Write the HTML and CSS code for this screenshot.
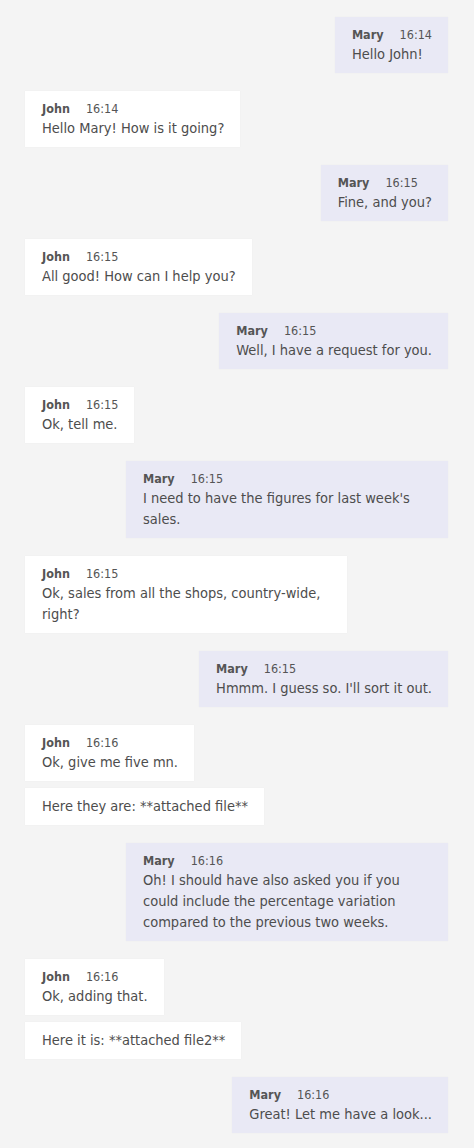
FILE: index.html
```html
<!DOCTYPE html>
<html lang="en">
<head>
<meta charset="utf-8">
<title>Chat</title>
<link rel="stylesheet" href="styles.css">
</head>
<body>
<div class="chat">
  <div class="msg mine"><div class="meta"><span class="name">Mary</span><span class="time">16:14</span></div><div class="text">Hello John!</div></div>
  <div class="msg"><div class="meta"><span class="name">John</span><span class="time">16:14</span></div><div class="text">Hello Mary! How is it going?</div></div>
  <div class="msg mine"><div class="meta"><span class="name">Mary</span><span class="time">16:15</span></div><div class="text">Fine, and you?</div></div>
  <div class="msg"><div class="meta"><span class="name">John</span><span class="time">16:15</span></div><div class="text">All good! How can I help you?</div></div>
  <div class="msg mine"><div class="meta"><span class="name">Mary</span><span class="time">16:15</span></div><div class="text">Well, I have a request for you.</div></div>
  <div class="msg"><div class="meta"><span class="name">John</span><span class="time">16:15</span></div><div class="text">Ok, tell me.</div></div>
  <div class="msg mine"><div class="meta"><span class="name">Mary</span><span class="time">16:15</span></div><div class="text">I need to have the figures for last week's sales.</div></div>
  <div class="msg"><div class="meta"><span class="name">John</span><span class="time">16:15</span></div><div class="text">Ok, sales from all the shops, country-wide, right?</div></div>
  <div class="msg mine"><div class="meta"><span class="name">Mary</span><span class="time">16:15</span></div><div class="text">Hmmm. I guess so. I'll sort it out.</div></div>
  <div class="msg"><div class="meta"><span class="name">John</span><span class="time">16:16</span></div><div class="text">Ok, give me five mn.</div></div>
  <div class="msg cont"><div class="text">Here they are: **attached file**</div></div>
  <div class="msg mine"><div class="meta"><span class="name">Mary</span><span class="time">16:16</span></div><div class="text">Oh! I should have also asked you if you could include the percentage variation compared to the previous two weeks.</div></div>
  <div class="msg"><div class="meta"><span class="name">John</span><span class="time">16:16</span></div><div class="text">Ok, adding that.</div></div>
  <div class="msg cont"><div class="text">Here it is: **attached file2**</div></div>
  <div class="msg mine"><div class="meta"><span class="name">Mary</span><span class="time">16:16</span></div><div class="text">Great! Let me have a look...</div></div>
</div>
</body>
</html>
```

FILE: styles.css
```css
html, body {
  margin: 0;
  padding: 0;
  background: #f4f4f4;
}
body {
  font-family: "DejaVu Sans Condensed", "DejaVu Sans", sans-serif;
  color: #4d4d4d;
}
.chat {
  min-height: 1148px;
  box-sizing: border-box;
  display: flex;
  flex-direction: column;
  align-items: flex-start;
  padding: 17px 26px 17px 25px;
}
.msg {
  background: #ffffff;
  max-width: 322px;
  box-sizing: border-box;
  padding: 8px 16px 8px 17px;
  margin-top: 18px;
  box-shadow: 0 0 1px rgba(0,0,0,0.06);
}
.msg:first-child { margin-top: 0; }
.msg.cont { margin-top: 7px; }
.msg.mine {
  align-self: flex-end;
  background: #e9e9f5;
}
.meta {
  font-size: 12.5px;
  line-height: 19px;
  white-space: nowrap;
}
.name {
  font-weight: bold;
  color: #555555;
  margin-right: 16px;
}
.time {
  color: #555555;
}
.text {
  font-size: 14.5px;
  line-height: 21px;
}
```
